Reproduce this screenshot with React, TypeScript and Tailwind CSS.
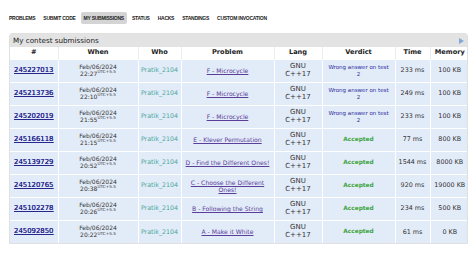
const nav = ["PROBLEMS", "SUBMIT CODE", "MY SUBMISSIONS", "STATUS", "HACKS", "STANDINGS", "CUSTOM INVOCATION"];

type Sub = {
  id: string;
  date: string;
  time: string;
  problem: string[];
  ok: boolean;
  ms: string;
  mem: string;
};

const subs: Sub[] = [
  { id: "245227013", date: "Feb/06/2024", time: "22:27", problem: ["F - Microcycle"], ok: false, ms: "233 ms", mem: "100 KB" },
  { id: "245213736", date: "Feb/06/2024", time: "22:10", problem: ["F - Microcycle"], ok: false, ms: "249 ms", mem: "100 KB" },
  { id: "245202019", date: "Feb/06/2024", time: "21:55", problem: ["F - Microcycle"], ok: false, ms: "233 ms", mem: "100 KB" },
  { id: "245166118", date: "Feb/06/2024", time: "21:15", problem: ["E - Klever Permutation"], ok: true, ms: "77 ms", mem: "800 KB" },
  { id: "245139729", date: "Feb/06/2024", time: "20:52", problem: ["D - Find the Different Ones!"], ok: true, ms: "1544 ms", mem: "8000 KB" },
  { id: "245120765", date: "Feb/06/2024", time: "20:38", problem: ["C - Choose the Different", "Ones!"], ok: true, ms: "920 ms", mem: "19000 KB" },
  { id: "245102278", date: "Feb/06/2024", time: "20:26", problem: ["B - Following the String"], ok: true, ms: "234 ms", mem: "500 KB" },
  { id: "245092850", date: "Feb/06/2024", time: "20:22", problem: ["A - Make it White"], ok: true, ms: "61 ms", mem: "0 KB" },
];

const cols = ["w-[48px]", "w-[80px]", "w-[43px]", "w-[93px]", "w-[48px]", "w-[73px]", "w-[35px]", "w-[39px]"];
const heads = ["#", "When", "Who", "Problem", "Lang", "Verdict", "Time", "Memory"];

export default function App() {
  return (
    <div className="h-[271px] w-[474px] bg-white font-['DejaVu_Sans',Verdana,sans-serif] text-[#222]">
      <nav className="flex items-center gap-[2px] pl-[6px] pt-[12px] font-['Liberation_Sans',Arial,sans-serif] text-[5px] font-bold tracking-[-0.25px] text-[#222]">
        {nav.map((n) => (
          <span
            key={n}
            className={`rounded-[2px] px-[3px] py-[3.5px] leading-none ${
              n === "MY SUBMISSIONS" ? "bg-[#d4d4d4]" : ""
            }`}
          >
            {n}
          </span>
        ))}
      </nav>

      <div className="ml-[9px] mt-[9px] w-[459px] overflow-hidden rounded-t-[3px] border border-[#e0e0e0]">
        <div className="flex h-[13px] items-center justify-between bg-[#e3e3e3] pl-[3px] pr-[3px] text-[7.2px] leading-none text-[#222]">
          <span>My contest submissions</span>
          <svg width="5" height="6" viewBox="0 0 5 6">
            <path d="M0 0 L5 3 L0 6 Z" fill="#7fa8d8" />
          </svg>
        </div>
        <table className="w-full table-fixed border-collapse text-[6px] leading-none">
          <colgroup>
            {cols.map((c, i) => (
              <col key={i} className={c} />
            ))}
          </colgroup>
          <thead>
            <tr className="h-[12px] bg-white">
              {heads.map((h) => (
                <th
                  key={h}
                  className="border-l border-[#ececec] p-0 text-center text-[6.6px] font-bold leading-none first:border-l-0"
                >
                  {h}
                </th>
              ))}
            </tr>
          </thead>
          <tbody>
            {subs.map((s) => (
              <tr key={s.id} className="h-[23px] border-t border-white bg-[#e2ebf8]">
                <td className="border-l border-white p-0 text-center first:border-l-0">
                  <span className="text-[6.9px] text-[#26268c] underline decoration-[0.6px] underline-offset-[1px] [text-shadow:0_0_0.3px_#26268c]">
                    {s.id}
                  </span>
                </td>
                <td className="border-l border-white p-0 text-center text-[6px] leading-[6.5px] text-[#333]">
                  <div>{s.date}</div>
                  <div>
                    {s.time}
                    <sup className="text-[4.2px] leading-none">UTC+5.5</sup>
                  </div>
                </td>
                <td className="border-l border-white p-0 text-center text-[6.3px] text-[#4aa89a]">
                  Pratik_2104
                </td>
                <td className="border-l border-white p-0 text-center text-[6.1px] leading-[7px] text-[#5b3d9a]">
                  {s.problem.map((p) => (
                    <div key={p} className="underline decoration-[0.5px] underline-offset-[1px]">
                      {p}
                    </div>
                  ))}
                </td>
                <td className="border-l border-white p-0 text-center text-[7px] leading-[7.5px] text-[#333]">
                  <div>GNU</div>
                  <div>C++17</div>
                </td>
                <td className="border-l border-white p-0 text-center">
                  {s.ok ? (
                    <span className="text-[5.8px] font-bold text-[#3fa53f]">Accepted</span>
                  ) : (
                    <div className="text-[5.5px] leading-[6.5px] text-[#2c2ca0]">
                      <div>Wrong answer on test</div>
                      <div>2</div>
                    </div>
                  )}
                </td>
                <td className="border-l border-white p-0 text-center text-[6.4px] text-[#333]">{s.ms}</td>
                <td className="border-l border-white p-0 text-center text-[6.4px] text-[#333]">{s.mem}</td>
              </tr>
            ))}
          </tbody>
        </table>
      </div>
    </div>
  );
}
